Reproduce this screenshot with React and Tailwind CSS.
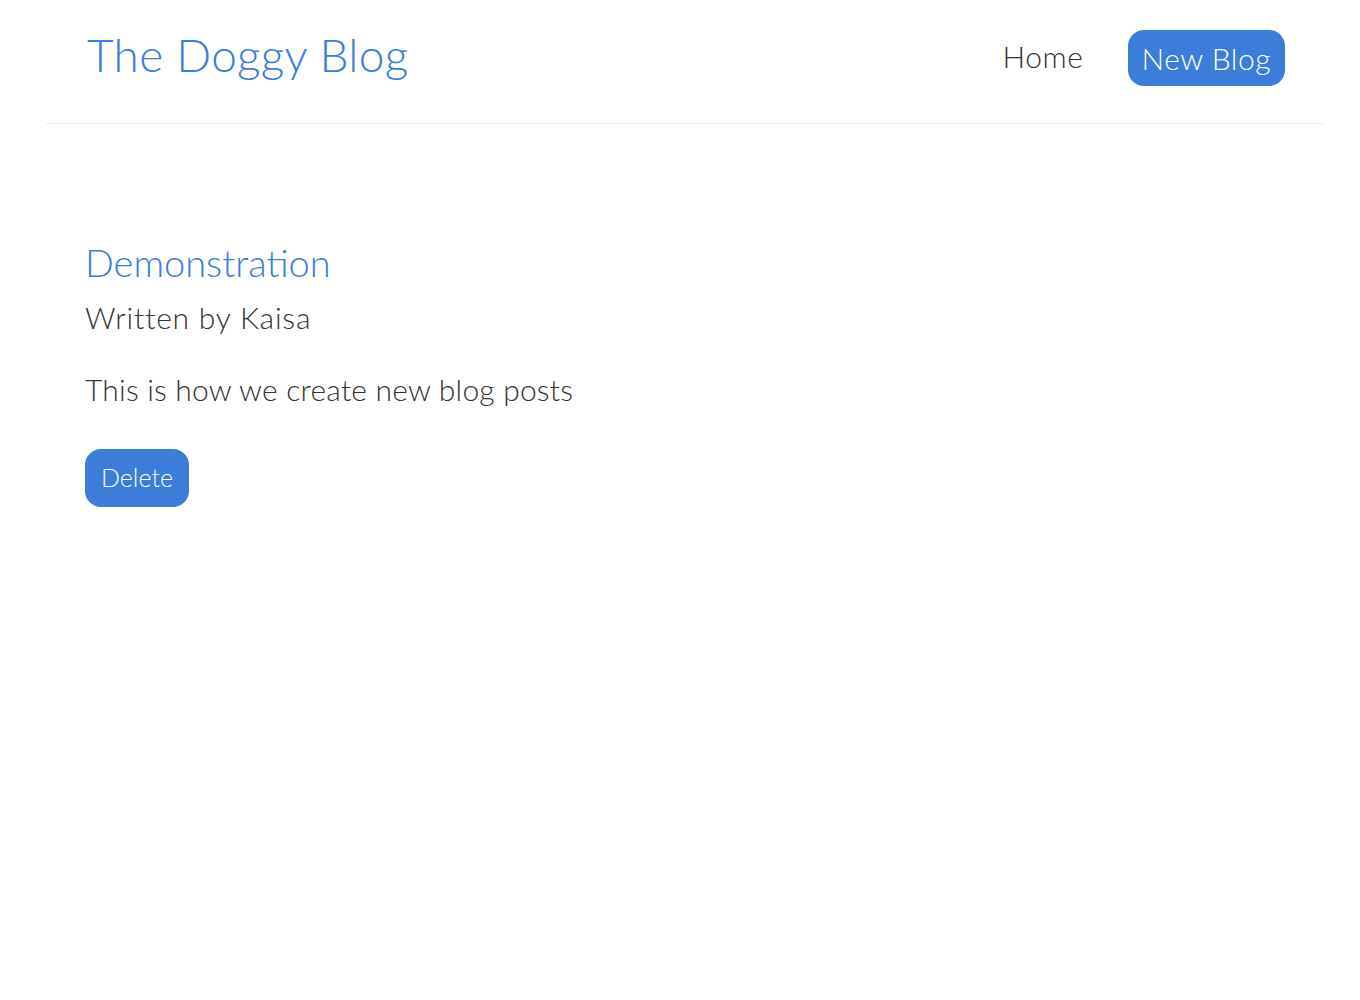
import React from 'react';

const font = { fontFamily: 'Lato, "Open Sans", sans-serif' };

const Navbar = () => {
  return (
    <nav className="ml-[45px] w-[1280px] h-[124px] flex items-center justify-between pl-[42px] pr-10 pb-[9px] border-b border-[#f0f0f0]">
      <h1 className="text-[46px] text-[#3b7dd8] font-light tracking-[0.3px] mb-[6px]">The Doggy Blog</h1>
      <div className="flex items-center gap-[44px]">
        <a className="text-[30px] text-[#333] font-light tracking-[0.6px] mb-[2px] cursor-pointer">Home</a>
        <a className="h-[56px] px-[14px] flex items-center rounded-2xl bg-[#3b7dd8] text-white text-[30px] font-light tracking-[0.5px] mt-[2px] cursor-pointer">
          New Blog
        </a>
      </div>
    </nav>
  );
};

const BlogDetails = () => {
  return (
    <div className="px-[85px] pt-[115px]">
      <h2 className="text-[38px] text-[#3b7dd8] font-light leading-tight">Demonstration</h2>
      <p className="text-[30px] text-[#333] font-light tracking-[0.8px] mt-[8px]">Written by Kaisa</p>
      <div className="text-[30px] text-[#333] font-light tracking-[0.2px] mt-[27px]">This is how we create new blog posts</div>
      <button className="mt-[37px] h-[58px] w-[104px] rounded-2xl bg-[#3b7dd8] text-white text-[25px] font-light">
        Delete
      </button>
    </div>
  );
};

export default function App() {
  return (
    <div className="min-h-screen bg-white" style={font}>
      <Navbar />
      <BlogDetails />
    </div>
  );
}
